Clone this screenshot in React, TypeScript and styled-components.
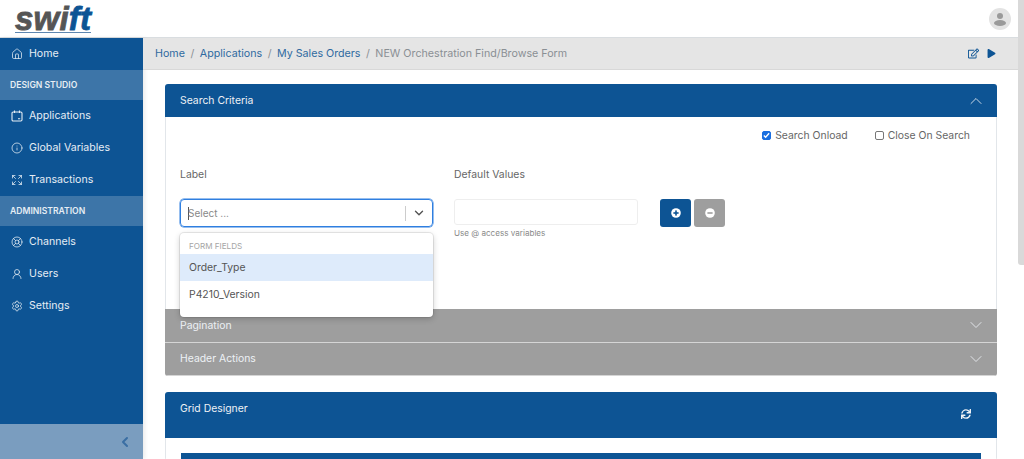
import React from "react";
import styled, { createGlobalStyle } from "styled-components";
import { Home, Info, Expand, LifeBuoy, UserRound, Settings, ChevronLeft, ChevronDown, ChevronUp } from "lucide-react";
import { FaRegEdit, FaPlay, FaSync } from "react-icons/fa";

const Global = createGlobalStyle`
  html, body { margin: 0; padding: 0; height: 459px; overflow: hidden; background: #fff; }
  body { font-family: "Inter", "Liberation Sans", sans-serif; color: #555; }
  * { box-sizing: border-box; }
`;
const Page = styled.div`position:relative;display:flex;flex-direction:column;height:459px;width:1024px;overflow:hidden;`;
const Scrollbar = styled.div`position:absolute;z-index:9;top:0;right:0;width:6px;height:265px;background:#d9d9d9;border-radius:0 0 0 3px;`;
const TopBar = styled.header`height:38px;flex:none;display:flex;align-items:center;justify-content:space-between;padding:0 13px 0 15px;border-bottom:1px solid #d9dde0;background:#fff;`;
const Logo = styled.div`align-self:flex-start;margin-top:3px;height:30px;font:italic 700 33px/32px "Liberation Sans",sans-serif;letter-spacing:0.2px;color:#555;-webkit-text-stroke:.8px currentColor;border-bottom:1px solid #5d86b0;white-space:nowrap;span{color:#0d5494;}`;
const Avatar = styled.div`width:22px;height:22px;border-radius:50%;background:#e3e3e3;display:flex;align-items:center;justify-content:center;`;
const Body = styled.div`flex:1;display:flex;min-height:0;`;
const Side = styled.aside`width:143px;flex:none;background:#0d5494;display:flex;flex-direction:column;color:#e6edf4;box-shadow:2px 0 4px rgba(0,0,0,.08);`;
const NavItem = styled.div`height:32px;display:flex;align-items:center;gap:6px;padding:0 0 1px 11px;font-size:10.6px;`;
const NavHead = styled.div`height:30px;display:flex;align-items:center;padding-left:10px;font-size:8.6px;font-weight:600;background:#3d75a8;`;
const SideFill = styled.div`flex:1;`;
const Collapse = styled.div`height:35px;background:#7a9dbf;display:flex;align-items:center;justify-content:flex-end;padding-right:10px;color:#3a6ea3;`;
const Main = styled.main`flex:1;min-width:0;display:flex;flex-direction:column;`;
const Crumbs = styled.nav`height:32px;flex:none;background:#e5e5e5;border-bottom:1px solid #d8d8d8;display:flex;align-items:center;justify-content:space-between;padding:0 28px 0 12px;font-size:10.7px;color:#8a8f94;`;
const Trail = styled.div`display:flex;gap:5.5px;`;
const CrumbLink = styled.span`color:#2f6aa0;`;
const Tools = styled.div`display:flex;align-items:center;gap:8px;color:#0d5494;`;
const Content = styled.div`padding:14px 27px 0 22px;display:flex;flex-direction:column;gap:16px;`;
const Card = styled.section`border-radius:3px;background:#fff;overflow:hidden;`;
const Bar = styled.div<{ $grey?: boolean; $tall?: boolean }>`
  height:${p => (p.$tall ? 46 : p.$grey ? 33.5 : 33)}px;
  background:${p => (p.$grey ? "#9e9e9e" : "#0d5494")};
  color:#edf1f5;font-size:10.4px;display:flex;justify-content:space-between;
  align-items:${p => (p.$tall ? "flex-start" : "center")};
  padding:${p => (p.$tall ? "10px 26px 0 15px" : "0 11px 0 15px")};
  border-bottom:${p => (p.$grey ? "1px solid #d5d5d5" : "none")};
`;
const Form = styled.div`height:192px;padding:0 14px;display:flex;flex-direction:column;border-left:1px solid #e2e6ea;border-right:1px solid #e2e6ea;`;
const Checks = styled.div`display:flex;justify-content:flex-end;gap:27px;padding:12px 12px 0 0;font-size:10.4px;color:#666;`;
const Check = styled.label`display:flex;align-items:center;gap:4px;`;
const Box = styled.span<{ $on?: boolean }>`width:9px;height:9px;border-radius:2px;display:flex;align-items:center;justify-content:center;background:${p => (p.$on ? "#1a6fe0" : "#fff")};border:1px solid ${p => (p.$on ? "#1a6fe0" : "#777")};`;
const Fields = styled.div`display:flex;margin-top:26px;`;
const Field = styled.div<{ $w: number }>`width:${p => p.$w}px;flex:none;display:flex;flex-direction:column;position:relative;`;
const Label = styled.div`font-size:10.4px;height:14px;line-height:14px;color:#666;margin-bottom:17px;`;
const Select = styled.div`width:253px;height:28px;border:1px solid #2f7fe0;border-radius:4px;display:flex;align-items:center;box-shadow:0 0 0 .5px #2f7fe0;font-size:10px;color:#888;padding-left:7px;`;
const Caret = styled.span`width:1px;height:13px;background:#555;margin-right:-1px;`;
const Placeholder = styled.span`flex:1;`;
const Sep = styled.span`width:1px;height:15px;background:#ccc;`;
const Arrow = styled.span`width:26px;display:flex;justify-content:center;color:#555;`;
const Menu = styled.div`position:absolute;z-index:5;top:65px;left:0;width:253px;height:84px;background:#fff;border-radius:4px;box-shadow:0 0 0 1px rgba(0,0,0,.08),0 2px 6px rgba(0,0,0,.2);padding-top:4px;`;
const MenuHead = styled.div`height:17px;display:flex;align-items:center;padding-left:9px;font-size:8.1px;color:#a5a5a5;`;
const Option = styled.div<{ $active?: boolean }>`height:27px;display:flex;align-items:center;padding-left:9px;font-size:10.4px;color:#555;background:${p => (p.$active ? "#deebfb" : "#fff")};`;
const Input = styled.div`height:26px;width:184px;border:1px solid #eee;border-radius:3px;`;
const Help = styled.div`font-size:8.1px;color:#8a8a8a;margin-top:3px;`;
const Buttons = styled.div`display:flex;gap:3px;margin:31px 0 0 22px;`;
const Btn = styled.div<{ $grey?: boolean }>`width:31px;height:28px;border-radius:3px;display:flex;align-items:center;justify-content:center;background:${p => (p.$grey ? "#9e9e9e" : "#0d5494")};`;
const Inner = styled.div`height:22px;padding:15px 15px 0;border-left:1px solid #e2e6ea;border-right:1px solid #e2e6ea;`;
const InnerBar = styled.div`height:8px;background:#0d5494;`;

const Disc = ({ minus }: { minus?: boolean }) => (
  <svg width="10" height="10" viewBox="0 0 10 10">
    <circle cx="5" cy="5" r="4.8" fill="#fff" />
    <rect x="2.4" y="4.2" width="5.2" height="1.6" fill={minus ? "#9e9e9e" : "#0d5494"} />
    {!minus && <rect x="4.2" y="2.4" width="1.6" height="5.2" fill="#0d5494" />}
  </svg>
);

const AppsIcon = () => (
  <svg width="12" height="12" viewBox="0 0 12 12" fill="none" stroke="currentColor" strokeWidth="1.1">
    <rect x="1" y="2" width="10" height="9" rx="1.2" />
    <path d="M3.5 .6v2.4M8.5 .6v2.4M7 8.7h2.2" />
  </svg>
);

export default function App() {
  const nav = { size: 12, strokeWidth: 1.5 };
  return (
    <Page>
      <Global />
      <Scrollbar />
      <TopBar>
        <Logo>swi<span>ft</span></Logo>
        <Avatar>
          <svg width="14" height="14" viewBox="0 0 14 14">
            <circle cx="7" cy="4" r="3" fill="#9a9a9a" />
            <ellipse cx="7" cy="11" rx="6" ry="3" fill="#9a9a9a" />
          </svg>
        </Avatar>
      </TopBar>
      <Body>
        <Side>
          <NavItem><Home {...nav} />Home</NavItem>
          <NavHead>DESIGN STUDIO</NavHead>
          <NavItem><AppsIcon />Applications</NavItem>
          <NavItem><Info {...nav} />Global Variables</NavItem>
          <NavItem><Expand {...nav} />Transactions</NavItem>
          <NavHead>ADMINISTRATION</NavHead>
          <NavItem><LifeBuoy {...nav} />Channels</NavItem>
          <NavItem><UserRound {...nav} />Users</NavItem>
          <NavItem><Settings {...nav} />Settings</NavItem>
          <SideFill />
          <Collapse><ChevronLeft size={16} strokeWidth={3} /></Collapse>
        </Side>
        <Main>
          <Crumbs>
            <Trail>
              <CrumbLink>Home</CrumbLink><span>/</span>
              <CrumbLink>Applications</CrumbLink><span>/</span>
              <CrumbLink>My Sales Orders</CrumbLink><span>/</span>
              <span>NEW Orchestration Find/Browse Form</span>
            </Trail>
            <Tools><FaRegEdit size={11} /><FaPlay size={9} /></Tools>
          </Crumbs>
          <Content>
            <Card>
              <Bar>Search Criteria<ChevronUp size={20} strokeWidth={1} /></Bar>
              <Form>
                <Checks>
                  <Check><Box $on><svg width="7" height="7" viewBox="0 0 8 8"><path d="M1 4l2 2 4-4.5" stroke="#fff" strokeWidth="1.6" fill="none" /></svg></Box>Search Onload</Check>
                  <Check><Box />Close On Search</Check>
                </Checks>
                <Fields>
                  <Field $w={274}>
                    <Label>Label</Label>
                    <Select>
                      <Caret /><Placeholder>Select ...</Placeholder><Sep /><Arrow><ChevronDown size={14} strokeWidth={2.4} /></Arrow>
                    </Select>
                    <Menu>
                      <MenuHead>FORM FIELDS</MenuHead>
                      <Option $active>Order_Type</Option>
                      <Option>P4210_Version</Option>
                    </Menu>
                  </Field>
                  <Field $w={184}>
                    <Label>Default Values</Label>
                    <Input />
                    <Help>Use @ access variables</Help>
                  </Field>
                  <Buttons>
                    <Btn><Disc /></Btn>
                    <Btn $grey><Disc minus /></Btn>
                  </Buttons>
                </Fields>
              </Form>
              <Bar $grey>Pagination<ChevronDown size={20} strokeWidth={1} /></Bar>
              <Bar $grey>Header Actions<ChevronDown size={20} strokeWidth={1} /></Bar>
            </Card>
            <Card>
              <Bar $tall>Grid Designer<FaSync size={10} style={{ marginTop: 7 }} /></Bar>
              <Inner><InnerBar /></Inner>
            </Card>
          </Content>
        </Main>
      </Body>
    </Page>
  );
}
